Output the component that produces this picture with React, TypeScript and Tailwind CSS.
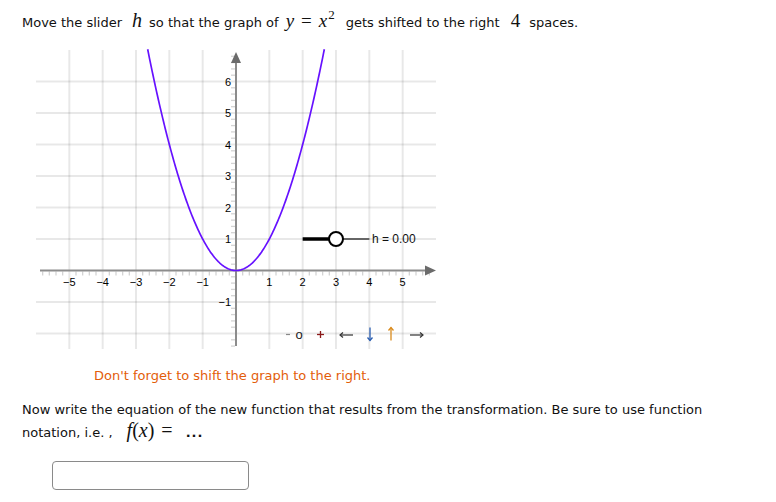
import React from "react";

const OX = 236;
const OY = 230.5; // svg coords (page y - 40)
const UX = 33.333;
const UY = 31.5;

function Graph() {
  const px = (x: number) => OX + x * UX;
  const py = (y: number) => OY - y * UY;
  const pts: string[] = [];
  for (let i = 0; i <= 200; i++) {
    const x = -2.65 + (5.3 * i) / 200;
    pts.push(`${px(x).toFixed(2)},${py(x * x).toFixed(2)}`);
  }
  const vLines = [-5, -4, -3, -2, -1, 1, 2, 3, 4, 5];
  const hLines = [6, 5, 4, 3, 2, 1, -1, -2];
  const xTicks: number[] = [];
  for (let i = -29; i <= 29; i++) if (i % 5 !== 0) xTicks.push(i / 5);
  const yTicks: number[] = [];
  for (let i = -12; i <= 34; i++) if (i % 5 !== 0) yTicks.push(i / 5);
  const font = "'Liberation Sans', Arial, sans-serif";
  const by = py(-2);
  return (
    <svg width={450} height={320} viewBox="0 0 450 320" className="block">
      {vLines.map((k) => (
        <line key={"v" + k} x1={px(k)} x2={px(k)} y1={10} y2={309} stroke="rgba(0,0,0,0.09)" strokeWidth={2} />
      ))}
      {hLines.map((k) => (
        <line key={"h" + k} x1={36} x2={436} y1={py(k)} y2={py(k)} stroke="rgba(0,0,0,0.09)" strokeWidth={2} />
      ))}
      {xTicks.map((t, i) => (
        <line key={"xt" + i} x1={px(t)} x2={px(t)} y1={OY + 1} y2={OY + 5} stroke="#d4d4d4" strokeWidth={1.3} />
      ))}
      {yTicks.map((t, i) => (
        <line key={"yt" + i} x1={OX - 5} x2={OX - 1} y1={py(t)} y2={py(t)} stroke="#d4d4d4" strokeWidth={1.3} />
      ))}
      <line x1={40} x2={428} y1={OY} y2={OY} stroke="#8c8c8c" strokeWidth={2} />
      <line x1={OX} x2={OX} y1={306} y2={20} stroke="#8c8c8c" strokeWidth={2} />
      <polygon points={`436,${OY} 425,${OY - 5} 425,${OY + 5}`} fill="#6b6b6b" />
      <polygon points={`${OX},12 ${OX - 5},23 ${OX + 5},23`} fill="#6b6b6b" />
      {[-5, -4, -3, -2, -1, 1, 2, 3, 4, 5].map((k) => (
        <text key={"xl" + k} x={px(k)} y={OY + 15} fontSize={11} fontFamily={font} textAnchor="middle" fill="#000">
          {k < 0 ? "\u2212" + -k : k}
        </text>
      ))}
      {[6, 5, 4, 3, 2, 1, -1].map((k) => (
        <text key={"yl" + k} x={OX - 5} y={py(k) + 4} fontSize={11} fontFamily={font} textAnchor="end" fill="#000">
          {k < 0 ? "\u2212" + -k : k}
        </text>
      ))}
      <polyline points={pts.join(" ")} fill="none" stroke="#6611ff" strokeWidth={1.7} />
      {/* slider */}
      <line x1={px(2)} x2={px(3)} y1={py(1)} y2={py(1)} stroke="#000" strokeWidth={3.5} />
      <line x1={px(3)} x2={px(4)} y1={py(1)} y2={py(1)} stroke="#666" strokeWidth={2} />
      <circle cx={px(3)} cy={py(1)} r={7} fill="#fff" stroke="#000" strokeWidth={2} />
      <text x={372} y={py(1) + 4} fontSize={12} fontFamily={font} fill="#111">h = 0.00</text>
      {/* buttons */}
      <line x1={286} x2={290} y1={by + 1} y2={by + 1} stroke="#888" strokeWidth={1.2} />
      <text x={299} y={by + 5} textAnchor="middle" fill="#222" fontSize={13} fontFamily={font}>o</text>
      <g stroke="#8b1a1a" strokeWidth={1.3}>
        <line x1={317} x2={324} y1={by + 1} y2={by + 1} />
        <line x1={320.5} x2={320.5} y1={by - 2.5} y2={by + 4.5} />
      </g>
      <g stroke="#333" strokeWidth={1.2} fill="none">
        <line x1={340} x2={353} y1={by + 1.5} y2={by + 1.5} />
        <polyline points={`343,${by - 1} 340,${by + 1.5} 343,${by + 4}`} />
      </g>
      <g stroke="#2a5db0" strokeWidth={1.3} fill="none">
        <line x1={370} x2={370} y1={by - 6} y2={by + 7} />
        <polyline points={`367.5,${by + 4} 370,${by + 7} 372.5,${by + 4}`} />
      </g>
      <g stroke="#d98a1c" strokeWidth={1.3} fill="none">
        <line x1={391} x2={391} y1={by - 6} y2={by + 7} />
        <polyline points={`388.5,${by - 3} 391,${by - 6} 393.5,${by - 3}`} />
      </g>
      <g stroke="#333" strokeWidth={1.2} fill="none">
        <line x1={410} x2={423} y1={by + 1.5} y2={by + 1.5} />
        <polyline points={`420,${by - 1} 423,${by + 1.5} 420,${by + 4}`} />
      </g>
    </svg>
  );
}

const SERIF = "font-['Liberation_Serif',serif]";

export default function App() {
  return (
    <div className="w-[776px] h-[502px] bg-white overflow-hidden text-[#111] font-['DejaVu_Sans',sans-serif] text-[13px]">
      <div className="h-[40px] pl-[22px] pt-[7px] leading-[26px] whitespace-nowrap">
        Move the slider<span className={`${SERIF} italic text-[20px] ml-[10px] mr-[7px]`}>h</span>so that the graph of
        <span className={`${SERIF} ml-[7px] mr-[11px] text-[19px]`}>
          <span className="italic">y</span>
          <span className="mx-[7px]">=</span>
          <span className="italic">x</span>
          <span className="text-[13px] relative -top-[8px] ml-[1px]">2</span>
        </span>
        gets shifted to the right<span className={`${SERIF} ml-[11px] mr-[9px] text-[19px]`}>4</span>spaces.
      </div>
      <Graph />
      <div className="mt-[6px] ml-[94px] h-[20px] leading-[20px] text-[#e35d0a]">Don't forget to shift the graph to the right.</div>
      <div className="mt-[14px] ml-[22px] leading-[20px]">
        <div className="whitespace-nowrap">
          Now write the equation of the new function that results from the transformation. Be sure to use function
        </div>
        <div className="whitespace-nowrap">
          notation, i.e. ,
          <span className={`${SERIF} ml-[14px] mr-[6px] text-[20px]`}>
            <span className="italic">f</span>(<span className="italic">x</span>)<span className="mx-[7px]">=</span>
          </span>
          <span className="tracking-[1px] font-bold">...</span>
        </div>
      </div>
      <input
        type="text"
        className="block mt-[18px] ml-[52px] w-[197px] h-[29px] border border-[#8a8a8a] rounded-[4px] bg-white"
      />
    </div>
  );
}
